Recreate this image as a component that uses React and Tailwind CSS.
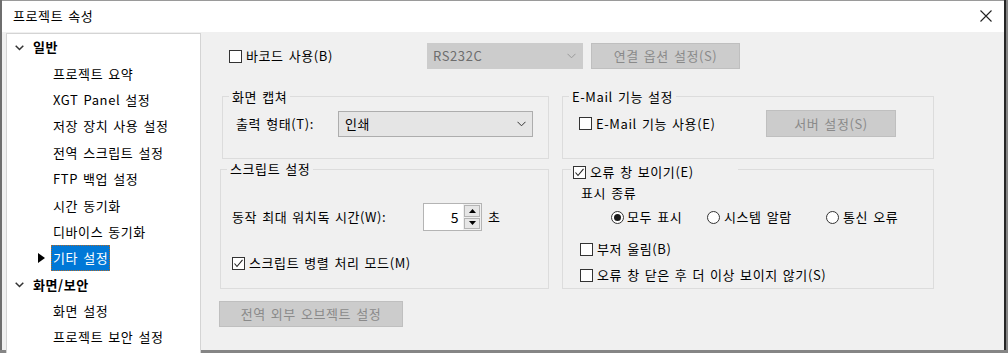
import React from "react";

function Check({ checked }) {
  return (
    <span className="w-[13px] h-[13px] border border-[#333333] bg-white flex items-center justify-center shrink-0">
      {checked && (
        <svg width="11" height="11" viewBox="0 0 11 11">
          <path d="M1.5 5.5 L4 8.5 L9.5 1.8" fill="none" stroke="#222" strokeWidth="1.1" />
        </svg>
      )}
    </span>
  );
}

function Radio({ checked }) {
  return (
    <span className="w-[13px] h-[13px] rounded-full border border-[#333333] bg-white flex items-center justify-center shrink-0">
      {checked && <span className="w-[7px] h-[7px] rounded-full bg-[#1a1a1a]" />}
    </span>
  );
}

function Chevron({ color = "#333" }) {
  return (
    <svg width="9" height="6" viewBox="0 0 9 6">
      <path d="M0.5 0.8 L4.5 4.8 L8.5 0.8" fill="none" stroke={color} strokeWidth="1" />
    </svg>
  );
}

function TreeGroup({ label }) {
  return (
    <div className="h-[26.4px] flex items-center pl-[8px]">
      <svg width="9" height="6" viewBox="0 0 9 6" className="mt-[1px]">
        <path d="M0.7 0.7 L4.5 4.5 L8.3 0.7" fill="none" stroke="#333" strokeWidth="1.5" />
      </svg>
      <span className="ml-[9px] font-bold">{label}</span>
    </div>
  );
}

function TreeItem({ label }) {
  return (
    <div className="h-[26.4px] flex items-center pl-[46px]">
      <span>{label}</span>
    </div>
  );
}

export default function App() {
  return (
    <div className="w-[1008px] h-[353px] bg-[#858585] pr-[2px] overflow-hidden font-['Noto_Sans_CJK_JP',sans-serif] [word-spacing:1.5px] tracking-[0.6px] text-[13px] text-black leading-[16px]">
      <div className="h-[350px] flex flex-col border-l-2 border-l-[#6e6e6e] border-r-2 border-r-[#262626]">
        {/* Title bar */}
        <div className="h-[32px] shrink-0 bg-white border-t border-t-[#9a9a9a] flex items-center pl-[11px] pr-[12px] pb-[1px]">
          <span className="flex-1">프로젝트 속성</span>
          <svg width="12" height="12" viewBox="0 0 12 12">
            <path d="M0.5 0.5 L11.5 11.5 M11.5 0.5 L0.5 11.5" stroke="#222" strokeWidth="1.1" />
          </svg>
        </div>

        {/* Body */}
        <div className="flex-1 bg-[#f0f0f0] flex min-h-0">
          {/* Tree */}
          <div className="ml-[4px] mt-[1px] w-[195px] h-[330px] shrink-0 bg-white border border-[#d4d4d4]">
            <TreeGroup label="일반" />
            <TreeItem label="프로젝트 요약" />
            <TreeItem label="XGT Panel 설정" />
            <TreeItem label="저장 장치 사용 설정" />
            <TreeItem label="전역 스크립트 설정" />
            <TreeItem label="FTP 백업 설정" />
            <TreeItem label="시간 동기화" />
            <TreeItem label="디바이스 동기화" />
            <div className="h-[26.4px] flex items-center pl-[31px]">
              <svg width="7" height="10" viewBox="0 0 7 10">
                <path d="M0 0 L7 5 L0 10 Z" fill="#000" />
              </svg>
              <span className="ml-[6px] h-[26px] flex items-center px-[1px] bg-[#0078d7] text-white border border-dotted border-[#b06a2a]">
                기타 설정
              </span>
            </div>
            <TreeGroup label="화면/보안" />
            <TreeItem label="화면 설정" />
            <TreeItem label="프로젝트 보안 설정" />
          </div>

          {/* Right pane */}
          <div className="flex-1 pt-[11px]">
            {/* Row 1 */}
            <div className="flex items-center h-[26px] pl-[28px]">
              <div className="w-[198px] flex items-center gap-[4px]">
                <Check />
                <span>바코드 사용(B)</span>
              </div>
              <div className="w-[156px] h-[26px] bg-[#cccccc] border border-[#cccccc] flex items-center pl-[5px] pr-[6px] text-[#6d6d6d]">
                <span className="flex-1">RS232C</span>
                <Chevron color="#9a9a9a" />
              </div>
              <div className="ml-[8px] w-[149px] h-[26px] bg-[#cccccc] border border-[#bfbfbf] flex items-center justify-center text-[#8a8a8a]">
                연결 옵션 설정(S)
              </div>
            </div>

            {/* Columns */}
            <div className="flex mt-[20px] ml-[19px] gap-[13px]">
              {/* Left column */}
              <div className="w-[329px] flex flex-col">
                <div className="relative ml-[2px] pt-[7px]">
                  <span className="absolute left-[7px] top-0 px-[3px] bg-[#f0f0f0]">화면 캡쳐</span>
                  <div className="h-[63px] border border-[#dcdcdc]">
                    <div className="flex items-center mt-[14px] h-[26px] pl-[13px]">
                      <span className="w-[102px]">출력 형태(T):</span>
                      <div className="w-[195px] h-[26px] bg-[#e5e5e5] border border-[#adadad] flex items-center pl-[6px] pr-[6px]">
                        <span className="flex-1">인쇄</span>
                        <Chevron color="#333" />
                      </div>
                    </div>
                  </div>
                </div>

                <div className="relative mt-[2px] pt-[8px]">
                  <span className="absolute left-[7px] top-0 px-[3px] bg-[#f0f0f0]">스크립트 설정</span>
                  <div className="h-[120px] border border-[#dcdcdc]">
                    <div className="flex items-center mt-[33px] h-[28px] pl-[11px]">
                      <span className="w-[191px]">동작 최대 워치독 시간(W):</span>
                      <div className="w-[59px] h-[28px] border border-[#b4b4b4] bg-white flex">
                        <div className="flex-1 flex items-center justify-end pr-[4px] text-[14px]">5</div>
                        <div className="w-[18px] flex flex-col bg-[#f0f0f0]">
                          <div className="flex-1 m-[1px] mb-0 bg-[#e6e6e6] border border-[#b4b4b4] flex items-center justify-center">
                            <svg width="7" height="4" viewBox="0 0 7 4"><path d="M0 4 L3.5 0 L7 4 Z" fill="#000" /></svg>
                          </div>
                          <div className="flex-1 m-[1px] bg-[#e6e6e6] border border-[#b4b4b4] flex items-center justify-center">
                            <svg width="7" height="4" viewBox="0 0 7 4"><path d="M0 0 L3.5 4 L7 0 Z" fill="#000" /></svg>
                          </div>
                        </div>
                      </div>
                      <span className="ml-[6px]">초</span>
                    </div>
                    <div className="flex items-center mt-[23px] h-[18px] pl-[11px] gap-[4px]">
                      <Check checked />
                      <span>스크립트 병렬 처리 모드(M)</span>
                    </div>
                  </div>
                </div>

                <div className="mt-[12px] -ml-[1px] w-[184px] h-[26px] bg-[#cccccc] border border-[#bfbfbf] flex items-center justify-center text-[#8a8a8a]">
                  전역 외부 오브젝트 설정
                </div>
              </div>

              {/* Right column */}
              <div className="w-[372px] flex flex-col">
                <div className="relative pt-[7px]">
                  <span className="absolute left-[7px] top-0 px-[3px] bg-[#f0f0f0]">E-Mail 기능 설정</span>
                  <div className="h-[63px] border border-[#dcdcdc]">
                    <div className="flex items-center mt-[13px] h-[27px] pl-[16px]">
                      <div className="w-[187px] flex items-center gap-[4px]">
                        <Check />
                        <span>E-Mail 기능 사용(E)</span>
                      </div>
                      <div className="w-[130px] h-[27px] bg-[#cccccc] border border-[#bfbfbf] flex items-center justify-center text-[#8a8a8a]">
                        서버 설정(S)
                      </div>
                    </div>
                  </div>
                </div>

                <div className="relative mt-[4px] pt-[6px]">
                  <div className="absolute left-[9px] top-0 w-[167px] h-[18px] pl-[2px] bg-[#f0f0f0] flex items-center gap-[4px]">
                    <Check checked />
                    <span>오류 창 보이기(E)</span>
                  </div>
                  <div className="h-[120px] border border-[#dcdcdc]">
                    <div className="flex items-center mt-[14px] h-[18px] pl-[18px]">표시 종류</div>
                    <div className="flex items-center mt-[6px] h-[18px] pl-[48px]">
                      <div className="w-[96px] flex items-center gap-[3px]">
                        <Radio checked />
                        <span>모두 표시</span>
                      </div>
                      <div className="w-[119px] flex items-center gap-[4px]">
                        <Radio />
                        <span>시스템 알람</span>
                      </div>
                      <div className="flex items-center gap-[4px]">
                        <Radio />
                        <span>통신 오류</span>
                      </div>
                    </div>
                    <div className="flex items-center mt-[14px] h-[18px] pl-[17px] gap-[4px]">
                      <Check />
                      <span>부저 울림(B)</span>
                    </div>
                    <div className="flex items-center mt-[8px] h-[18px] pl-[17px] gap-[4px]">
                      <Check />
                      <span>오류 창 닫은 후 더 이상 보이지 않기(S)</span>
                    </div>
                  </div>
                </div>
              </div>
            </div>
          </div>
        </div>
      </div>
    </div>
  );
}
